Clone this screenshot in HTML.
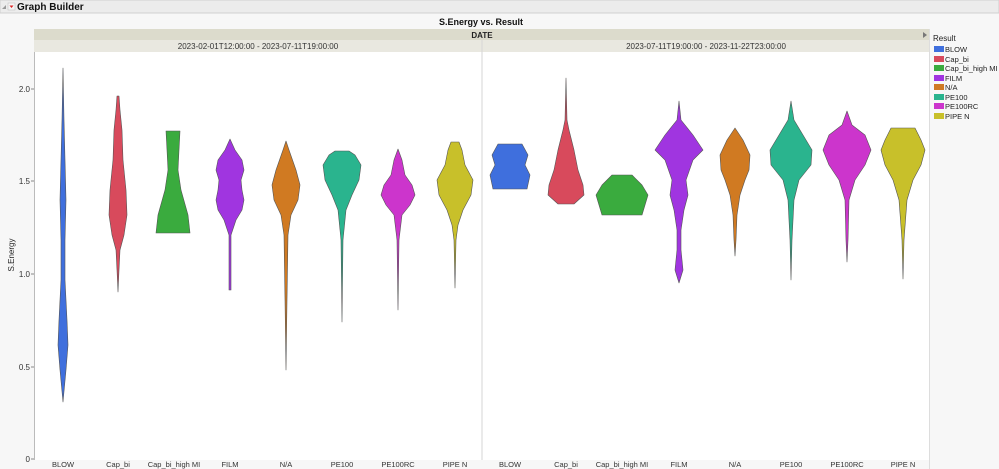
<!DOCTYPE html>
<html><head><style>
html,body{margin:0;padding:0;width:999px;height:469px;overflow:hidden;background:#f7f7f7;font-family:"Liberation Sans",sans-serif}
svg text{font-family:"Liberation Sans",sans-serif}
</style></head><body>
<svg width="999" height="469" viewBox="0 0 999 469" xmlns="http://www.w3.org/2000/svg">
<rect x="0" y="0" width="999" height="13" fill="#ececec" stroke="#d0d0d0"/>
<path d="M2 9 L6 5 L6 9Z" fill="#999"/>
<rect x="8" y="3" width="7" height="7" fill="#f4f4f4" stroke="#bbb" stroke-width="0.5"/>
<path d="M9.5 5.5 L13.5 5.5 L11.5 8Z" fill="#d22"/>
<text x="17" y="10" font-size="10" font-weight="bold" fill="#111">Graph Builder</text>
<text x="481" y="25" font-size="9" font-weight="bold" text-anchor="middle" fill="#111">S.Energy vs. Result</text>
<rect x="34" y="29" width="896" height="11" fill="#dcdbcc"/>
<text x="482" y="38" font-size="8" font-weight="bold" text-anchor="middle" fill="#222">DATE</text>
<path d="M923 32 L927 35 L923 38Z" fill="#777"/>
<rect x="34" y="40" width="896" height="12" fill="#e9e8e0"/>
<text x="258" y="49" font-size="8" text-anchor="middle" fill="#333">2023-02-01T12:00:00 - 2023-07-11T19:00:00</text>
<text x="706" y="49" font-size="8" text-anchor="middle" fill="#333">2023-07-11T19:00:00 - 2023-11-22T23:00:00</text>
<rect x="35" y="52" width="894" height="408" fill="#fff"/>
<line x1="482" y1="40" x2="482" y2="460" stroke="#d6d6d6"/>
<line x1="34.5" y1="52" x2="34.5" y2="460" stroke="#bbb"/>
<line x1="929.5" y1="29" x2="929.5" y2="469" stroke="#ddd"/>
<g font-size="8" fill="#333" text-anchor="end">
<text x="30" y="462">0</text><text x="30" y="370">0.5</text><text x="30" y="277">1.0</text><text x="30" y="184">1.5</text><text x="30" y="92">2.0</text>
</g>
<g stroke="#888"><line x1="31" y1="459" x2="34" y2="459"/><line x1="31" y1="367" x2="34" y2="367"/><line x1="31" y1="274" x2="34" y2="274"/><line x1="31" y1="181" x2="34" y2="181"/><line x1="31" y1="89" x2="34" y2="89"/></g>
<text transform="translate(14,255) rotate(-90)" font-size="8" text-anchor="middle" fill="#222">S.Energy</text>
<g font-size="7.5" fill="#333" text-anchor="middle">
<text x="63" y="467">BLOW</text><text x="118" y="467">Cap_bi</text><text x="174" y="467">Cap_bi_high MI</text><text x="230" y="467">FILM</text><text x="286" y="467">N/A</text><text x="342" y="467">PE100</text><text x="398" y="467">PE100RC</text><text x="455" y="467">PIPE N</text>
<text x="510" y="467">BLOW</text><text x="566" y="467">Cap_bi</text><text x="622" y="467">Cap_bi_high MI</text><text x="679" y="467">FILM</text><text x="735" y="467">N/A</text><text x="791" y="467">PE100</text><text x="847" y="467">PE100RC</text><text x="903" y="467">PIPE N</text>
</g>
<g stroke="#555" stroke-width="0.6" stroke-linejoin="round">
<polygon fill="#3f6fdd" points="63,68 64,120 66,200 65,240 65,280 67,320 68,345 66,370 63,402 60,370 58,345 59,320 61,280 61,240 60,200 62,120"/>
<polygon fill="#d84a5c" points="118,96 119,96 120,110 122,130 123,160 126,190 127,215 124,235 120,250 119,270 118,292 117,270 116,250 112,235 109,215 110,190 113,160 114,130 116,110 117,96"/>
<polygon fill="#3aab3e" points="166,131 180,131 179,150 178,170 181,190 188,215 190,233 156,233 158,215 165,190 168,170 167,150"/>
<polygon fill="#a035e0" points="230,139 235,150 242,160 244,170 241,180 242,190 244,200 242,210 236,220 231,235 231,290 229,290 229,235 224,220 218,210 216,200 218,190 219,180 216,170 218,160 225,150"/>
<polygon fill="#d07a22" points="286,141 289,150 296,170 300,185 298,200 291,215 288,235 287,300 286,370 285,300 284,235 281,215 274,200 272,185 276,170 283,150"/>
<polygon fill="#2ab48e" points="335,151 349,151 355,155 361,165 359,180 352,195 346,210 343,240 342,322 341,240 338,210 332,195 325,180 323,165 329,155"/>
<polygon fill="#cc35cc" points="398,149 402,160 405,175 412,185 415,195 410,205 402,215 399,240 398,310 397,240 394,215 386,205 381,195 384,185 391,175 394,160"/>
<polygon fill="#c8c02a" points="451,142 459,142 462,150 465,165 473,180 471,195 463,210 458,225 456,240 455,288 454,240 452,225 447,210 439,195 437,180 445,165 448,150"/>
<polygon fill="#3f6fdd" points="498,144 522,144 528,155 525,165 530,175 527,189 493,189 490,175 495,165 492,155"/>
<polygon fill="#d84a5c" points="566,78 567,120 569,130 574,150 578,170 583,185 584,195 574,204 558,204 548,195 549,185 554,170 558,150 563,130 565,120"/>
<polygon fill="#3aab3e" points="612,175 632,175 642,185 648,195 642,215 602,215 596,195 602,185"/>
<polygon fill="#a035e0" points="679,101 681,120 693,135 703,150 693,160 686,180 688,195 684,210 681,230 681,250 683,270 679,283 675,270 677,250 677,230 674,210 670,195 672,180 665,160 655,150 665,135 677,120"/>
<polygon fill="#d07a22" points="735,128 743,140 750,155 749,170 745,180 740,195 737,215 736,240 735,256 734,240 733,215 730,195 725,180 721,170 720,155 727,140"/>
<polygon fill="#2ab48e" points="791,101 794,120 803,135 812,150 811,165 799,180 794,200 792,240 791,280 790,240 788,200 783,180 771,165 770,150 779,135 788,120"/>
<polygon fill="#cc35cc" points="847,111 852,125 865,135 871,150 865,165 855,180 849,200 848,240 847,262 846,240 845,200 839,180 829,165 823,150 829,135 842,125"/>
<polygon fill="#c8c02a" points="891,128 915,128 921,140 925,150 921,165 913,180 907,200 904,240 903,279 902,240 899,200 893,180 885,165 881,150 885,140"/>
</g>
<text x="933" y="41" font-size="8" fill="#222">Result</text>
<g font-size="7.5" fill="#222">
<rect x="934" y="46" width="10" height="6" fill="#3f6fdd"/><text x="945" y="52">BLOW</text>
<rect x="934" y="56" width="10" height="6" fill="#d84a5c"/><text x="945" y="62">Cap_bi</text>
<rect x="934" y="65" width="10" height="6" fill="#3aab3e"/><text x="945" y="71">Cap_bi_high MI</text>
<rect x="934" y="75" width="10" height="6" fill="#a035e0"/><text x="945" y="81">FILM</text>
<rect x="934" y="84" width="10" height="6" fill="#d07a22"/><text x="945" y="90">N/A</text>
<rect x="934" y="94" width="10" height="6" fill="#2ab48e"/><text x="945" y="100">PE100</text>
<rect x="934" y="103" width="10" height="6" fill="#cc35cc"/><text x="945" y="109">PE100RC</text>
<rect x="934" y="113" width="10" height="6" fill="#c8c02a"/><text x="945" y="119">PIPE N</text>
</g>
</svg>
</body></html>
